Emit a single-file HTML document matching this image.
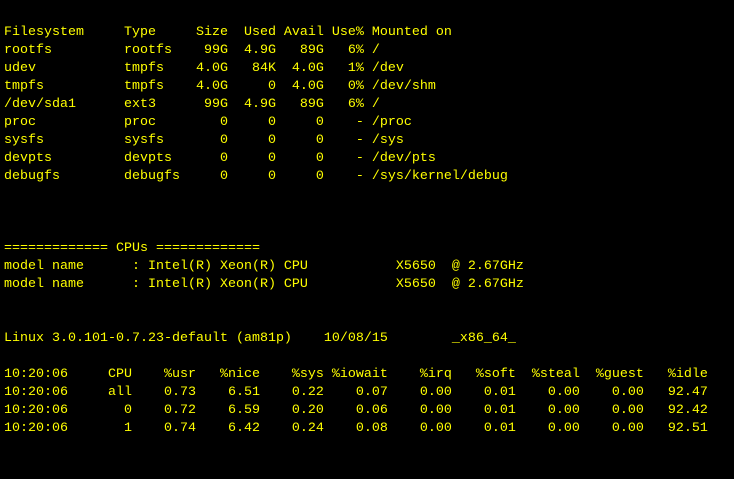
<!DOCTYPE html>
<html><head><meta charset="utf-8"><style>
html,body{margin:0;padding:0;background:#000;width:734px;height:479px;overflow:hidden}
pre{margin:0;position:absolute;left:4px;top:24px;font-family:"Liberation Mono",monospace;font-size:13.33px;line-height:18px;color:#ffff00}
</style></head><body><pre>Filesystem     Type     Size  Used Avail Use% Mounted on
rootfs         rootfs    99G  4.9G   89G   6% /
udev           tmpfs    4.0G   84K  4.0G   1% /dev
tmpfs          tmpfs    4.0G     0  4.0G   0% /dev/shm
/dev/sda1      ext3      99G  4.9G   89G   6% /
proc           proc        0     0     0    - /proc
sysfs          sysfs       0     0     0    - /sys
devpts         devpts      0     0     0    - /dev/pts
debugfs        debugfs     0     0     0    - /sys/kernel/debug



============= CPUs =============
model name      : Intel(R) Xeon(R) CPU           X5650  @ 2.67GHz
model name      : Intel(R) Xeon(R) CPU           X5650  @ 2.67GHz


Linux 3.0.101-0.7.23-default (am81p)    10/08/15        _x86_64_

10:20:06     CPU    %usr   %nice    %sys %iowait    %irq   %soft  %steal  %guest   %idle
10:20:06     all    0.73    6.51    0.22    0.07    0.00    0.01    0.00    0.00   92.47
10:20:06       0    0.72    6.59    0.20    0.06    0.00    0.01    0.00    0.00   92.42
10:20:06       1    0.74    6.42    0.24    0.08    0.00    0.01    0.00    0.00   92.51
</pre></body></html>
